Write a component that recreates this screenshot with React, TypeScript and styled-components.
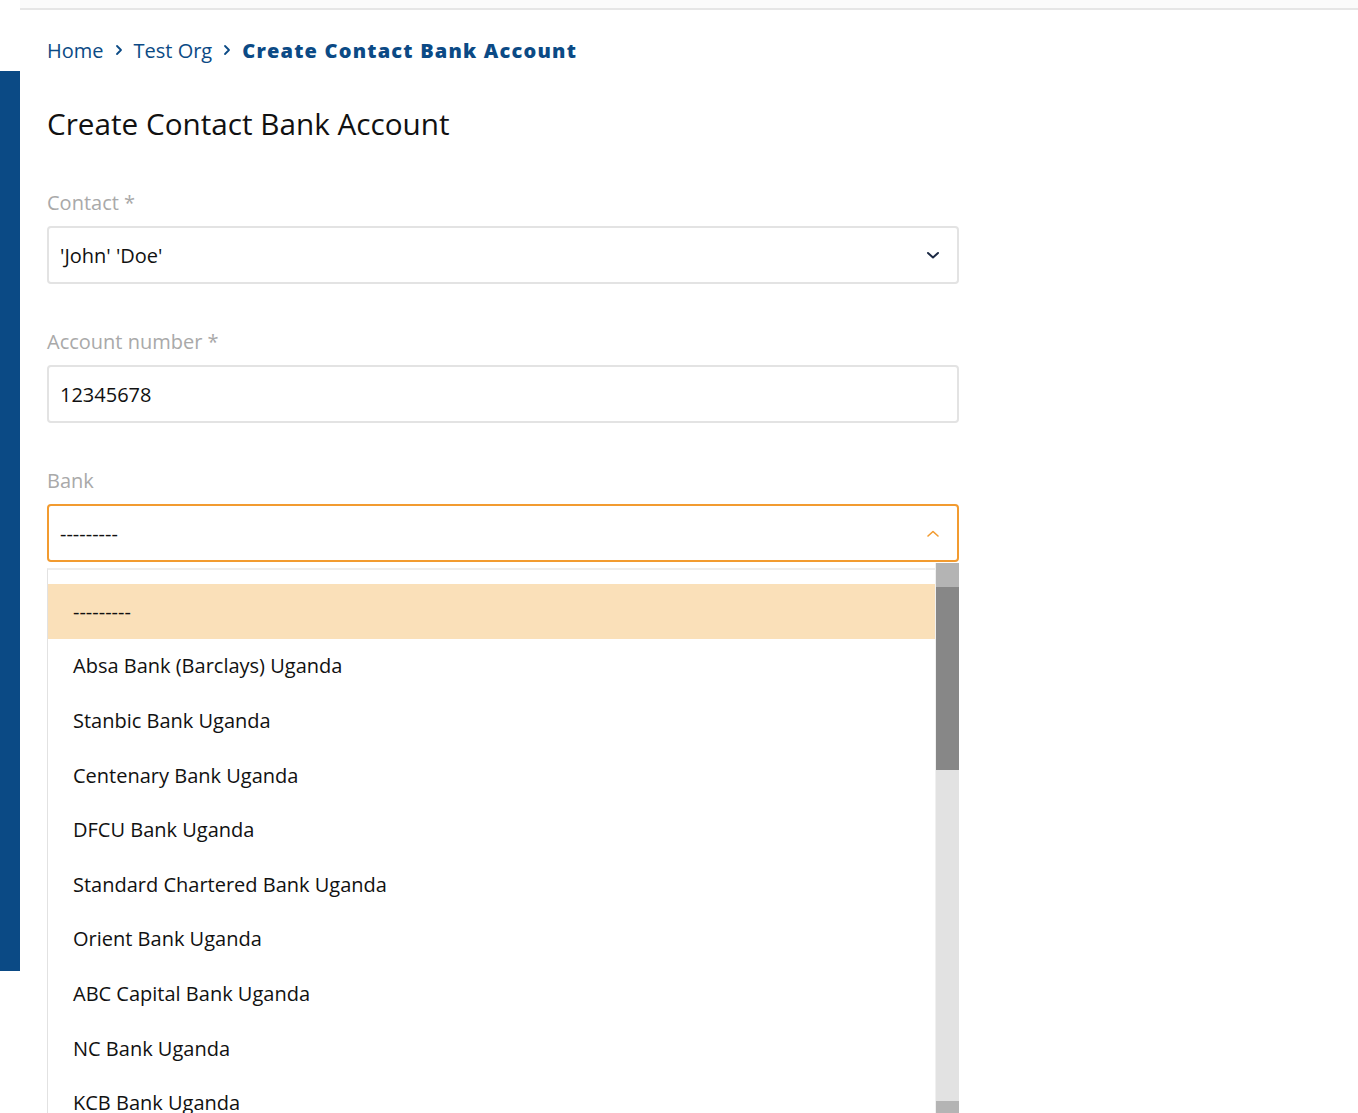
import React from "react";
import styled, { createGlobalStyle } from "styled-components";

const Global = createGlobalStyle`
  html, body { margin: 0; padding: 0; background: #fff; }
  body { font-family: "Open Sans", "Noto Sans", sans-serif; color: #111; }
  * { box-sizing: border-box; }
`;

const Page = styled.div`
  display: flex;
  width: 1358px;
  height: 1113px;
  overflow: hidden;
`;

const SideRail = styled.div`
  width: 20px;
  flex: none;
  padding-top: 71px;
`;

const SideBar = styled.div`
  width: 20px;
  height: 900px;
  background: #0b4a85;
`;

const Main = styled.div`
  flex: 1;
  display: flex;
  flex-direction: column;
`;

const TopStrip = styled.div`
  height: 10px;
  background: #fbfbfb;
  border-bottom: 2px solid #e6e6e6;
`;

const Content = styled.div`
  padding: 27px 0 0 27px;
  width: 939px;
`;

const Crumbs = styled.nav`
  display: flex;
  align-items: center;
  gap: 10px;
  height: 26px;
  font-size: 20px;
  color: #0b4a85;
`;

const Crumb = styled.span<{ $current?: boolean }>`
  font-weight: ${(p) => (p.$current ? 800 : 400)};
  letter-spacing: ${(p) => (p.$current ? "1.2px" : "0")};
  white-space: nowrap;
`;

const Sep = styled.svg`
  width: 10px;
  height: 12px;
  flex: none;
`;

const Title = styled.h1`
  margin: 41px 0 0;
  font-size: 29.7px;
  font-weight: 400;
  line-height: 40px;
  color: #111;
`;

const Field = styled.div`
  position: relative;
  margin-top: 46px;
  & + & { margin-top: 45px; }
`;

const Label = styled.div`
  font-size: 20px;
  line-height: 26px;
  color: #a9a9a9;
  margin-bottom: 10px;
`;

const Box = styled.div<{ $focused?: boolean }>`
  height: 58px;
  border: ${(p) => (p.$focused ? "2px solid #f29b30" : "2px solid #e3e3e3")};
  border-radius: 4px;
  display: flex;
  align-items: center;
  padding: 0 17px 0 11px;
  font-size: 20px;
  color: #111;
`;

const Value = styled.span`
  flex: 1;
`;

const Chevron = styled.svg`
  width: 14px;
  height: 9px;
  flex: none;
`;

const Dropdown = styled.div`
  position: absolute;
  left: 0;
  top: 100%;
  margin-top: 1px;
  width: 912px;
  height: 562px;
  display: flex;
`;

const List = styled.div`
  flex: 1;
  margin-top: 5px;
  border-left: 1px solid #e2e2e2;
  border-top: 2px solid #ededed;
  padding-top: 14px;
  background: #fff;
  overflow: hidden;
`;

const Option = styled.div<{ $active?: boolean }>`
  height: 54.6px;
  display: flex;
  align-items: center;
  padding-left: 25px;
  font-size: 20px;
  color: #111;
  background: ${(p) => (p.$active ? "#fae0b9" : "transparent")};
`;

const Scrollbar = styled.div`
  width: 24px;
  flex: none;
  display: flex;
  flex-direction: column;
  background: #e2e2e2;
  border-left: 1px solid #f0f0f0;
`;

const ScrollButton = styled.div`
  height: 24px;
  flex: none;
  background: #b4b4b4;
`;

const Thumb = styled.div`
  height: 183px;
  flex: none;
  background: #878787;
`;

const Track = styled.div`
  flex: 1;
`;

const ChevronDown = ({ color }: { color: string }) => (
  <Chevron viewBox="0 0 14 9">
    <path d="M2 2 L7 6.5 L12 2" fill="none" stroke={color} strokeWidth="2" strokeLinecap="round" strokeLinejoin="round" />
  </Chevron>
);

const ChevronUp = ({ color }: { color: string }) => (
  <Chevron viewBox="0 0 14 9">
    <path d="M2 7 L7 2.5 L12 7" fill="none" stroke={color} strokeWidth="1.6" strokeLinecap="round" strokeLinejoin="round" />
  </Chevron>
);

const SepIcon = () => (
  <Sep viewBox="0 0 10 12">
    <path d="M3 2 L7 6 L3 10" fill="none" stroke="#0b4a85" strokeWidth="1.8" strokeLinecap="round" strokeLinejoin="round" />
  </Sep>
);

const banks = [
  "---------",
  "Absa Bank (Barclays) Uganda",
  "Stanbic Bank Uganda",
  "Centenary Bank Uganda",
  "DFCU Bank Uganda",
  "Standard Chartered Bank Uganda",
  "Orient Bank Uganda",
  "ABC Capital Bank Uganda",
  "NC Bank Uganda",
  "KCB Bank Uganda",
];

export default function App() {
  return (
    <>
      <Global />
      <Page>
        <SideRail>
          <SideBar />
        </SideRail>
        <Main>
          <TopStrip />
          <Content>
            <Crumbs>
              <Crumb>Home</Crumb>
              <SepIcon />
              <Crumb>Test Org</Crumb>
              <SepIcon />
              <Crumb $current>Create Contact Bank Account</Crumb>
            </Crumbs>
            <Title>Create Contact Bank Account</Title>
            <Field>
              <Label>Contact *</Label>
              <Box>
                <Value>'John' 'Doe'</Value>
                <ChevronDown color="#1c2a44" />
              </Box>
            </Field>
            <Field>
              <Label>Account number *</Label>
              <Box>
                <Value>12345678</Value>
              </Box>
            </Field>
            <Field>
              <Label>Bank</Label>
              <Box $focused>
                <Value>---------</Value>
                <ChevronUp color="#f29b30" />
              </Box>
              <Dropdown>
                <List>
                  {banks.map((b, i) => (
                    <Option key={b} $active={i === 0}>
                      {b}
                    </Option>
                  ))}
                </List>
                <Scrollbar>
                  <ScrollButton />
                  <Thumb />
                  <Track />
                  <ScrollButton />
                </Scrollbar>
              </Dropdown>
            </Field>
          </Content>
        </Main>
      </Page>
    </>
  );
}
